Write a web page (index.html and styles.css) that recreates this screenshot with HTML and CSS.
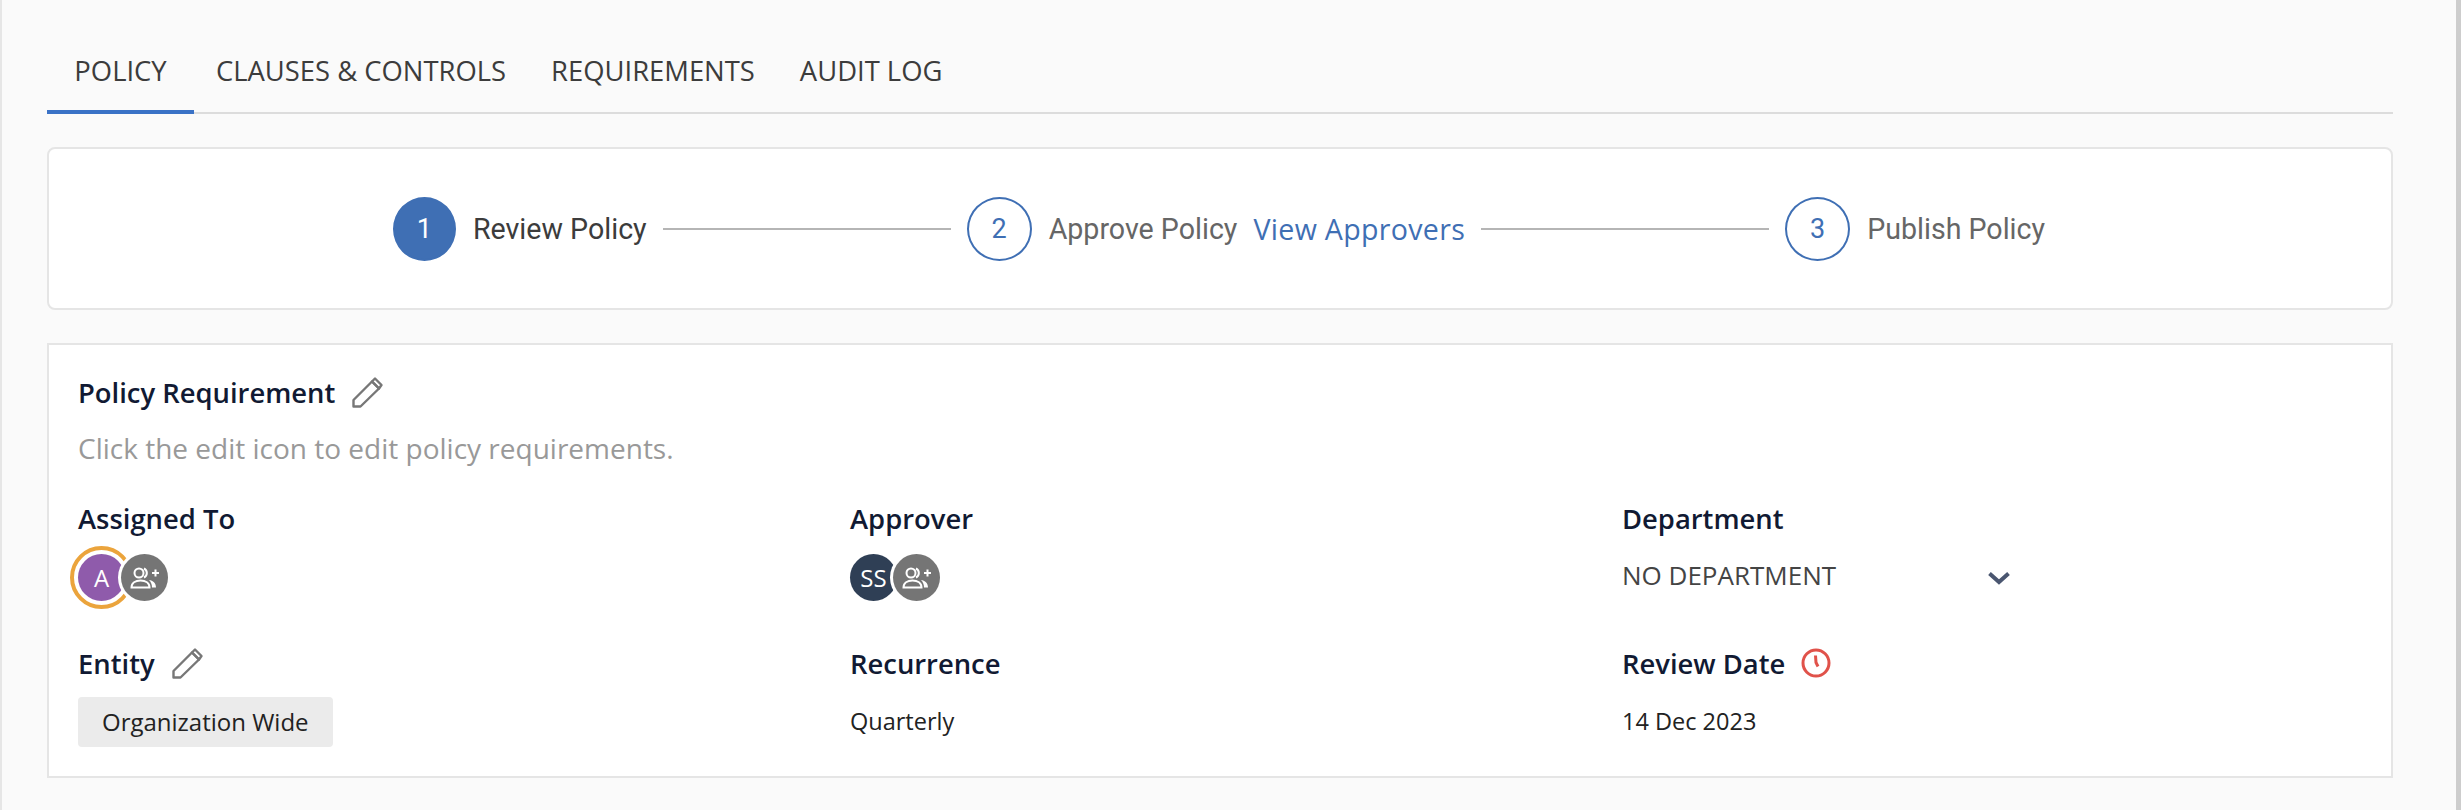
FILE: index.html
```html
<!DOCTYPE html>
<html lang="en">
<head>
<meta charset="utf-8">
<title>Policy</title>
<link rel="stylesheet" href="styles.css">
</head>
<body>
<main class="page">
  <nav class="tabs">
    <a class="tab tab-active">POLICY</a>
    <a class="tab">CLAUSES &amp; CONTROLS</a>
    <a class="tab">REQUIREMENTS</a>
    <a class="tab">AUDIT LOG</a>
  </nav>
  <section class="stepper">
    <div class="step-circle step-circle-done">1</div>
    <span class="step-label step-label-active">Review Policy</span>
    <div class="step-line"></div>
    <div class="step-circle">2</div>
    <span class="step-label">Approve Policy</span>
    <a class="step-link">View Approvers</a>
    <div class="step-line"></div>
    <div class="step-circle">3</div>
    <span class="step-label">Publish Policy</span>
  </section>
  <section class="card">
    <div class="heading-row">
      <h2 class="heading">Policy Requirement</h2>
      <svg class="pencil" viewBox="0 0 32 32"><path d="M2.500 29.500V23L21 4.500l7 7L9.500 29.500z"/><path d="M24 1.500L30.500 8 28 11.500l-7-7z"/></svg>
    </div>
    <p class="hint">Click the edit icon to edit policy requirements.</p>
    <div class="grid">
      <div class="field">
        <h3 class="heading">Assigned To</h3>
        <div class="avatars">
          <span class="avatar avatar-purple avatar-ringed">A</span>
          <span class="avatar avatar-add"><svg class="add-icon" viewBox="0 0 30 22"><circle cx="9" cy="6" r="4.500"/><path d="M1.500 20.500c0-4.500 4-7 9-7s9 2.500 9 7z"/><path d="M14 1.500a5 5 0 0 1 0 9"/><path class="add-solid" d="M19 13c4 .5 7 3 7 7.500h-4c0-3-1-5.500-3-7.500z"/><path d="M22 6h7M25.500 2.500v7"/></svg></span>
        </div>
      </div>
      <div class="field">
        <h3 class="heading">Approver</h3>
        <div class="avatars">
          <span class="avatar avatar-navy">SS</span>
          <span class="avatar avatar-add"><svg class="add-icon" viewBox="0 0 30 22"><circle cx="9" cy="6" r="4.500"/><path d="M1.500 20.500c0-4.500 4-7 9-7s9 2.500 9 7z"/><path d="M14 1.500a5 5 0 0 1 0 9"/><path class="add-solid" d="M19 13c4 .5 7 3 7 7.500h-4c0-3-1-5.500-3-7.500z"/><path d="M22 6h7M25.500 2.500v7"/></svg></span>
        </div>
      </div>
      <div class="field">
        <h3 class="heading">Department</h3>
        <div class="select">
          <span class="select-value">NO DEPARTMENT</span>
          <svg class="chevron" viewBox="0 0 24 14"><path d="M2.500 2.500L12 11l9.500-8.500"/></svg>
        </div>
      </div>
      <div class="field field-lower">
        <div class="heading-row">
          <h3 class="heading">Entity</h3>
          <svg class="pencil" viewBox="0 0 32 32"><path d="M2.500 29.500V23L21 4.500l7 7L9.500 29.500z"/><path d="M24 1.500L30.500 8 28 11.500l-7-7z"/></svg>
        </div>
        <span class="chip">Organization Wide</span>
      </div>
      <div class="field field-lower">
        <div class="heading-row"><h3 class="heading">Recurrence</h3></div>
        <span class="value">Quarterly</span>
      </div>
      <div class="field field-lower">
        <div class="heading-row">
          <h3 class="heading">Review Date</h3>
          <svg class="clock" viewBox="0 0 30 30"><circle cx="15" cy="15" r="13"/><path d="M14.500 7.500l.5 7 2 4"/></svg>
        </div>
        <span class="value">14 Dec 2023</span>
      </div>
    </div>
  </section>
</main>
</body>
</html>
```
FILE: styles.css
```css
* { box-sizing: border-box; }
html, body { margin: 0; height: 100%; }
body {
  background: #fafafa;
  border-left: 2px solid #e6e6e6;
  border-right: 5px solid #cdcdcd;
  font-family: "Open Sans", sans-serif;
  color: #111a33;
  overflow: hidden;
}
.page {
  width: 2346px;
  margin-left: 45px;
  padding-top: 48px;
}

.tabs {
  display: flex;
  gap: 45px;
  height: 66px;
  border-bottom: 2px solid #dcdcdc;
}
.tab {
  height: 66px;
  font-size: 27.400px;
  line-height: 46px;
  color: #3c3c3c;
}
.tab-active {
  width: 147px;
  margin-right: -23px;
  text-align: center;
  border-bottom: 4px solid #3a72c6;
}

.stepper {
  display: flex;
  align-items: center;
  justify-content: center;
  height: 163px;
  margin-top: 33px;
  padding-right: 2px;
  background: #fff;
  border: 2px solid #e5e5e5;
  border-radius: 8px;
}
.step-circle {
  flex: none;
  display: flex;
  align-items: center;
  justify-content: center;
  width: 65px;
  height: 64px;
  border: 2px solid #3f6fb4;
  border-radius: 50%;
  color: #3f6fb4;
  font-family: Roboto, sans-serif;
  font-size: 27px;
}
.step-circle-done { width: 63px; background: #3f6fb4; color: #fff; }
.step-label {
  margin-left: 17px;
  font-family: Roboto, sans-serif;
  font-size: 28.600px;
  color: #666;
}
.step-label-active { color: #3c3c3c; }
.step-link {
  margin-left: 16px;
  font-family: "Open Sans", sans-serif;
  font-size: 28.600px;
  font-weight: 500;
  letter-spacing: 0.3px;
  color: #3f6fb4;
}
.step-line {
  flex: none;
  width: 288px;
  height: 2px;
  margin: 0 16px;
  background: #b5b5b5;
}

.card {
  height: 435px;
  margin-top: 33px;
  padding: 28px 30px 0 29px;
  background: #fff;
  border: 2px solid #e5e5e5;
}
.heading-row {
  display: flex;
  align-items: center;
  height: 40px;
  gap: 16px;
}
.heading {
  margin: 0;
  font-size: 27.400px;
  font-weight: 600;
  line-height: 40px;
  color: #111a33;
}
.pencil {
  width: 32px;
  height: 32px;
  fill: none;
  stroke: #777;
  stroke-width: 2.400;
  stroke-linejoin: round;
}
.hint {
  margin: 17px 0 0;
  font-size: 28px;
  line-height: 36px;
  color: #999;
}
.grid {
  display: grid;
  grid-template-columns: repeat(3, 772px);
  margin-top: 33px;
}
.field { display: flex; flex-direction: column; align-items: flex-start; }
.field-lower { margin-top: 43px; }
.avatars {
  display: flex;
  align-items: center;
  margin-top: 15px;
  height: 47px;
}
.avatar {
  flex: none;
  display: flex;
  align-items: center;
  justify-content: center;
  width: 47px;
  height: 47px;
  border-radius: 50%;
  color: #fff;
  font-size: 24px;
}
.avatar-purple { background: #8f5bab; }
.avatar-navy { background: #2f3f55; }
.avatar-ringed { outline: 4px solid #eba43c; outline-offset: 4px; }
.avatar-add {
  position: relative;
  margin-left: -4px;
  background: #757575;
  box-shadow: 0 0 0 3px #fff;
}
.add-icon {
  width: 30px;
  height: 22px;
  fill: none;
  stroke: #fff;
  stroke-width: 2;
}
.add-solid { fill: #fff; stroke: none; }
.select {
  display: flex;
  align-items: center;
  justify-content: space-between;
  width: 392px;
  height: 47px;
  margin-top: 12px;
}
.select-value { font-size: 26px; color: #444; }
.chevron {
  width: 24px;
  height: 14px;
  fill: none;
  stroke: #4a5670;
  stroke-width: 4;
  margin-right: 3px;
  margin-top: 6px;
}
.chip {
  margin-top: 13px;
  padding: 0 24px;
  height: 50px;
  line-height: 50px;
  background: #ebebeb;
  border-radius: 4px;
  font-size: 24px;
  color: #222;
}
.value {
  margin-top: 12px;
  height: 50px;
  line-height: 50px;
  font-size: 23.500px;
  color: #222;
}
.clock {
  width: 30px;
  height: 30px;
  fill: none;
  stroke: #e0524a;
  stroke-width: 3;
  margin-top: -2px;
}
```
